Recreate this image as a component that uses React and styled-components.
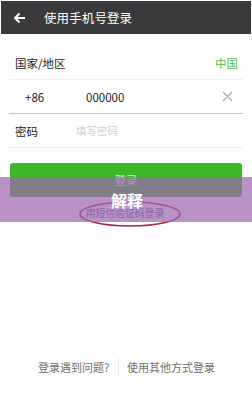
import React from "react";
import styled, { createGlobalStyle } from "styled-components";

const GlobalStyle = createGlobalStyle`
  body {
    margin: 0;
    background: #ffffff;
    font-family: "Noto Sans CJK SC", "Noto Sans", sans-serif;
  }
`;

const Page = styled.div`
  position: relative;
  width: 252px;
  height: 400px;
  display: flex;
  flex-direction: column;
  background: #fefefe;
  overflow: hidden;
`;

const Header = styled.header`
  height: 33px;
  margin: 1px 1px 0;
  background: #3a393b;
  display: flex;
  align-items: center;
  padding-left: 12px;
  color: #ffffff;
`;

const Title = styled.div`
  margin-left: 18px;
  font-size: 12.5px;
  letter-spacing: 0.1px;
`;

const Form = styled.div`
  padding: 12px 9px 0;
  display: flex;
  flex-direction: column;
`;

const Row = styled.div`
  height: ${p => p.h}px;
  display: flex;
  align-items: center;
  padding: 0 6px;
  border-bottom: 1px solid ${p => p.line};
  font-size: 11.5px;
  color: #222;
`;

const Label = styled.div`
  width: ${p => p.w || 61}px;
  padding-left: ${p => p.pl || 0}px;
`;

const Value = styled.div`
  flex: 1;
  color: ${p => (p.placeholder ? "#cfcfcf" : "#222")};
  font-size: ${p => (p.placeholder ? 10.5 : 11.5)}px;
`;

const Region = styled.div`
  color: #5cb84c;
  font-size: 11.5px;
  margin-right: -1px;
`;

const Button = styled.div`
  margin: 15px 1px 0;
  height: 34px;
  border-radius: 3px;
  background: #3cb827;
  color: #e8f6e4;
  font-size: 11.5px;
  display: flex;
  align-items: center;
  justify-content: center;
`;

const LinkWrap = styled.div`
  position: relative;
  margin-top: 9px;
  display: flex;
  justify-content: center;
`;

const SmsLink = styled.div`
  font-size: 9.8px;
  line-height: 14px;
  color: #4d5f8a;
  margin-right: 2px;
`;

const Ring = styled.svg`
  position: absolute;
  left: 69px;
  top: -6px;
`;

const Footer = styled.div`
  margin-top: auto;
  margin-bottom: 23px;
  display: flex;
  align-items: center;
  justify-content: center;
  font-size: 11px;
  color: #6f6f6f;
  height: 20px;
`;

const FooterLink = styled.div`
  padding: 0 ${p => p.pad}px;
`;

const Sep = styled.div`
  width: 1px;
  height: 18px;
  background: #ececec;
`;

const Overlay = styled.div`
  position: absolute;
  top: 177px;
  left: 0;
  right: 0;
  height: 45px;
  background: rgba(157, 104, 178, 0.72);
  display: flex;
  align-items: center;
  justify-content: center;
  color: #ffffff;
  font-size: 16px;
  font-weight: 700;
  padding-left: 2px;
`;

const BackArrow = () => (
  <svg width="13" height="12" viewBox="0 0 13 12">
    <path d="M12 6H2M6.5 1.5L2 6l4.5 4.5" fill="none" stroke="#fff" strokeWidth="2" />
  </svg>
);

const Clear = () => (
  <svg width="11" height="11" viewBox="0 0 11 11" style={{ marginRight: 4 }}>
    <path d="M1 1l9 9M10 1l-9 9" stroke="#a9a9a9" strokeWidth="1.1" />
  </svg>
);

export default function App() {
  return (
    <Page>
      <GlobalStyle />
      <Header>
        <BackArrow />
        <Title>使用手机号登录</Title>
      </Header>
      <Form>
        <Row h={33} line="#eeeeee">
          <Label>国家/地区</Label>
          <Value />
          <Region>中国</Region>
        </Row>
        <Row h={33} line="#bfc7bf">
          <Label pl={10}>+86</Label>
          <Value>000000</Value>
          <Clear />
        </Row>
        <Row h={33} line="#eeeeee">
          <Label>密码</Label>
          <Value placeholder>填写密码</Value>
        </Row>
        <Button>登录</Button>
        <LinkWrap>
          <SmsLink>用短信验证码登录</SmsLink>
          <Ring width="104" height="28" viewBox="0 0 104 28">
            <ellipse cx="52" cy="14" rx="50" ry="12" fill="none" stroke="#a3283c" strokeWidth="1.6" />
          </Ring>
        </LinkWrap>
      </Form>
      <Footer>
        <FooterLink pad={9}>登录遇到问题?</FooterLink>
        <Sep />
        <FooterLink pad={8}>使用其他方式登录</FooterLink>
      </Footer>
      <Overlay>解释</Overlay>
    </Page>
  );
}
